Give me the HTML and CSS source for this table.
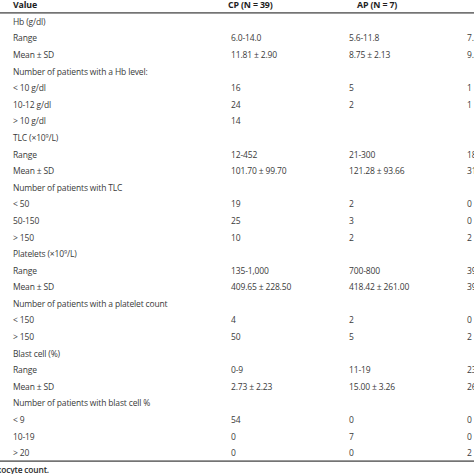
FILE: index.html
```html
<!DOCTYPE html>
<html>
<head>
<meta charset="utf-8">
<link rel="stylesheet" href="styles.css">
</head>
<body>
<div class="table">
  <div class="row head">
    <div class="c label">Value</div>
    <div class="c cp">CP (N = 39)</div>
    <div class="c ap">AP (N = 7)</div>
    <div class="c bp"></div>
  </div>
  <div class="body">
    <div class="row"><div class="c label">Hb (g/dl)</div><div class="c"></div><div class="c"></div><div class="c"></div></div>
    <div class="row"><div class="c label">Range</div><div class="c">6.0-14.0</div><div class="c">5.6-11.8</div><div class="c">7.1-10.2</div></div>
    <div class="row"><div class="c label">Mean ± SD</div><div class="c">11.81 ± 2.90</div><div class="c">8.75 ± 2.13</div><div class="c">9.10 ± 1.20</div></div>
    <div class="row"><div class="c label">Number of patients with a Hb level:</div><div class="c"></div><div class="c"></div><div class="c"></div></div>
    <div class="row"><div class="c label">&lt; 10 g/dl</div><div class="c">16</div><div class="c">5</div><div class="c">1</div></div>
    <div class="row"><div class="c label">10-12 g/dl</div><div class="c">24</div><div class="c">2</div><div class="c">1</div></div>
    <div class="row"><div class="c label">&gt; 10 g/dl</div><div class="c">14</div><div class="c"></div><div class="c"></div></div>
    <div class="row"><div class="c label">TLC (×10<sup>9</sup>/L)</div><div class="c"></div><div class="c"></div><div class="c"></div></div>
    <div class="row"><div class="c label">Range</div><div class="c">12-452</div><div class="c">21-300</div><div class="c">180-400</div></div>
    <div class="row"><div class="c label">Mean ± SD</div><div class="c">101.70 ± 99.70</div><div class="c">121.28 ± 93.66</div><div class="c">310.00 ± 50.10</div></div>
    <div class="row"><div class="c label">Number of patients with TLC</div><div class="c"></div><div class="c"></div><div class="c"></div></div>
    <div class="row"><div class="c label">&lt; 50</div><div class="c">19</div><div class="c">2</div><div class="c">0</div></div>
    <div class="row"><div class="c label">50-150</div><div class="c">25</div><div class="c">3</div><div class="c">0</div></div>
    <div class="row"><div class="c label">&gt; 150</div><div class="c">10</div><div class="c">2</div><div class="c">2</div></div>
    <div class="row"><div class="c label">Platelets (×10<sup>9</sup>/L)</div><div class="c"></div><div class="c"></div><div class="c"></div></div>
    <div class="row"><div class="c label">Range</div><div class="c">135-1,000</div><div class="c">700-800</div><div class="c">390-400</div></div>
    <div class="row"><div class="c label">Mean ± SD</div><div class="c">409.65 ± 228.50</div><div class="c">418.42 ± 261.00</div><div class="c">395.00 ± 7.07</div></div>
    <div class="row"><div class="c label">Number of patients with a platelet count</div><div class="c"></div><div class="c"></div><div class="c"></div></div>
    <div class="row"><div class="c label">&lt; 150</div><div class="c">4</div><div class="c">2</div><div class="c">0</div></div>
    <div class="row"><div class="c label">&gt; 150</div><div class="c">50</div><div class="c">5</div><div class="c">2</div></div>
    <div class="row"><div class="c label">Blast cell (%)</div><div class="c"></div><div class="c"></div><div class="c"></div></div>
    <div class="row"><div class="c label">Range</div><div class="c">0-9</div><div class="c">11-19</div><div class="c">23-30</div></div>
    <div class="row"><div class="c label">Mean ± SD</div><div class="c">2.73 ± 2.23</div><div class="c">15.00 ± 3.26</div><div class="c">26.50 ± 4.95</div></div>
    <div class="row"><div class="c label">Number of patients with blast cell %</div><div class="c"></div><div class="c"></div><div class="c"></div></div>
    <div class="row"><div class="c label">&lt; 9</div><div class="c">54</div><div class="c">0</div><div class="c">0</div></div>
    <div class="row"><div class="c label">10-19</div><div class="c">0</div><div class="c">7</div><div class="c">0</div></div>
    <div class="row"><div class="c label">&gt; 20</div><div class="c">0</div><div class="c">0</div><div class="c">2</div></div>
  </div>
  <div class="foot">TLC, total leukocyte count.</div>
</div>
</body>
</html>
```

FILE: styles.css
```css
html, body {
  margin: 0;
  padding: 0;
  background: #fff;
  overflow: hidden;
}
body {
  width: 474px;
  height: 474px;
  font-family: "Open Sans", Lato, sans-serif;
  font-size: 8.5px;
  letter-spacing: -0.15px;
  color: #3a3a3a;
}
.table {
  width: 600px;
  margin-top: -2px;
}
.row {
  display: grid;
  grid-template-columns: 231px 118px 118px 133px;
  height: 16.6px;
  align-items: center;
  white-space: nowrap;
}
.row.head {
  height: 14px;
  font-weight: bold;
  color: #1e1e1e;
  font-size: 8.8px;
}
.body {
  border-top: 1.5px solid #747474;
  border-bottom: 1.5px solid #747474;
  box-shadow: inset 0 1px 0 #9a9a9a, inset 0 -1px 0 #9a9a9a;
}
.label {
  padding-left: 13px;
}
.head .cp {
  margin-left: -3px;
}
.head .ap {
  margin-left: 8px;
}
sup {
  font-size: 5.5px;
  vertical-align: 3px;
  line-height: 0;
}
.foot {
  margin-top: 2px;
  margin-left: -54px;
  font-size: 8.4px;
  font-weight: 600;
  color: #2a2a2a;
  white-space: nowrap;
}
```
